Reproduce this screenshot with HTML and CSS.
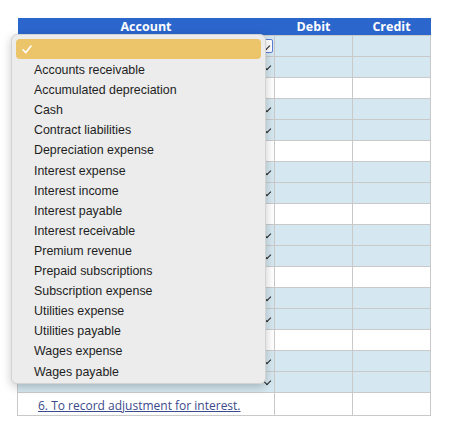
FILE: index.html
```html
<!DOCTYPE html>
<html lang="en">
<head>
  <meta charset="UTF-8">
  <meta name="viewport" content="width=device-width, initial-scale=1.0">
  <title>Journal Entry Worksheet</title>
  <link rel="stylesheet" href="styles.css">
</head>
<body>
  <div class="page">
    <table class="journal">
      <thead>
        <tr>
          <th class="col-account">Account</th>
          <th class="col-amount">Debit</th>
          <th class="col-amount">Credit</th>
        </tr>
      </thead>
      <tbody>
        <!-- entry 1 -->
        <tr class="entry">
          <td><div class="select focused"><span class="chevron"></span></div></td><td></td><td></td>
        </tr>
        <tr class="entry">
          <td><div class="select"><span class="chevron"></span></div></td><td></td><td></td>
        </tr>
        <tr class="note"><td></td><td></td><td></td></tr>
        <!-- entry 2 -->
        <tr class="entry">
          <td><div class="select"><span class="chevron"></span></div></td><td></td><td></td>
        </tr>
        <tr class="entry">
          <td><div class="select"><span class="chevron"></span></div></td><td></td><td></td>
        </tr>
        <tr class="note"><td></td><td></td><td></td></tr>
        <!-- entry 3 -->
        <tr class="entry">
          <td><div class="select"><span class="chevron"></span></div></td><td></td><td></td>
        </tr>
        <tr class="entry">
          <td><div class="select"><span class="chevron"></span></div></td><td></td><td></td>
        </tr>
        <tr class="note"><td></td><td></td><td></td></tr>
        <!-- entry 4 -->
        <tr class="entry">
          <td><div class="select"><span class="chevron"></span></div></td><td></td><td></td>
        </tr>
        <tr class="entry">
          <td><div class="select"><span class="chevron"></span></div></td><td></td><td></td>
        </tr>
        <tr class="note"><td></td><td></td><td></td></tr>
        <!-- entry 5 -->
        <tr class="entry">
          <td><div class="select"><span class="chevron"></span></div></td><td></td><td></td>
        </tr>
        <tr class="entry">
          <td><div class="select"><span class="chevron"></span></div></td><td></td><td></td>
        </tr>
        <tr class="note"><td></td><td></td><td></td></tr>
        <!-- entry 6 -->
        <tr class="entry">
          <td><div class="select"><span class="chevron"></span></div></td><td></td><td></td>
        </tr>
        <tr class="entry">
          <td><div class="select"><span class="chevron"></span></div></td><td></td><td></td>
        </tr>
        <tr class="note"><td><a href="#">6. To record adjustment for interest.</a></td><td></td><td></td></tr>
      </tbody>
    </table>

    <!-- open dropdown of the first account select -->
    <ul class="menu">
      <li class="selected">
        <svg class="check" width="10" height="9" viewBox="0 0 10 9"><polyline points="1,4.8 3.8,7.6 9,1" fill="none" stroke="#fff" stroke-width="1.6" stroke-linecap="round" stroke-linejoin="round"/></svg>
      </li>
      <li>Accounts receivable</li>
      <li>Accumulated depreciation</li>
      <li>Cash</li>
      <li>Contract liabilities</li>
      <li>Depreciation expense</li>
      <li>Interest expense</li>
      <li>Interest income</li>
      <li>Interest payable</li>
      <li>Interest receivable</li>
      <li>Premium revenue</li>
      <li>Prepaid subscriptions</li>
      <li>Subscription expense</li>
      <li>Utilities expense</li>
      <li>Utilities payable</li>
      <li>Wages expense</li>
      <li>Wages payable</li>
    </ul>
  </div>
</body>
</html>
```

FILE: styles.css
```css
body {
  margin: 0;
  padding: 0;
  background-color: #ffffff;
  font-family: 'Open Sans', 'Liberation Sans', sans-serif;
}
.page {
  position: relative;
  padding: 18px 0 0 17px;
}
.journal {
  border-collapse: collapse;
  width: 414px;
  table-layout: fixed;
}
.journal th {
  background-color: #2b66cc;
  color: #ffffff;
  font-weight: bold;
  font-size: 12.5px;
  height: 17px;
  padding: 1px 0 0;
  line-height: 16px;
  box-sizing: border-box;
}
.col-account {
  width: 257px;
}
.col-amount {
  width: 78px;
}
.journal td {
  border: 1px solid #c9c9c9;
  height: 21px;
  padding: 0;
  box-sizing: border-box;
}
.entry td {
  background-color: #d5e7f0;
}
.note td {
  background-color: #ffffff;
}
.note a {
  margin-left: 20px;
  font-size: 12px;
  color: #3a4a8c;
  text-decoration: underline;
}
.select {
  position: relative;
  height: 14px;
  margin: 0 1px 0 3px;
}
.select.focused {
  background: #ffffff;
  border: 1.5px solid #5b7fd6;
  border-radius: 2px;
  box-sizing: border-box;
}
.chevron {
  position: absolute;
  right: 3px;
  top: 3px;
  width: 5px;
  height: 5px;
  border-right: 1.6px solid #222;
  border-bottom: 1.6px solid #222;
  transform: rotate(45deg);
}
.menu {
  position: absolute;
  left: 11px;
  top: 34px;
  width: 255px;
  margin: 0;
  padding: 4px 4px 2px 4px;
  box-sizing: border-box;
  list-style: none;
  background-color: #ececec;
  border: 1px solid #d3d3d3;
  border-radius: 6px;
  box-shadow: 0 3px 10px rgba(0, 0, 0, 0.22);
  font-family: 'Liberation Sans', Arial, sans-serif;
  font-size: 12.4px;
  color: #1e1e1e;
}
.menu li {
  height: 20.1px;
  line-height: 20.1px;
  padding: 1px 0 0 18px;
  box-sizing: border-box;
  border-radius: 4px;
  position: relative;
}
.menu li.selected {
  background-color: #ecc46a;
}
.check {
  position: absolute;
  left: 6px;
  top: 6px;
}
```
